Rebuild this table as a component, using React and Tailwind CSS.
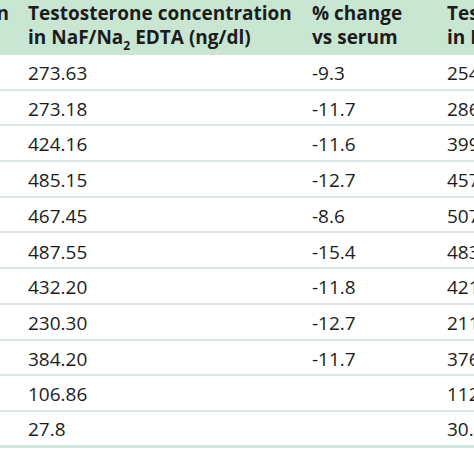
const rows = [
  ["273.63", "-9.3", "254.11"],
  ["273.18", "-11.7", "286.40"],
  ["424.16", "-11.6", "399.50"],
  ["485.15", "-12.7", "457.30"],
  ["467.45", "-8.6", "507.20"],
  ["487.55", "-15.4", "483.10"],
  ["432.20", "-11.8", "421.90"],
  ["230.30", "-12.7", "211.60"],
  ["384.20", "-11.7", "376.40"],
  ["106.86", "", "112.50"],
  ["27.8", "", "30.5"],
];

const cols = "grid grid-cols-[20px_284px_135px_120px]";

export default function App() {
  return (
    <div
      className="w-[474px] h-[474px] overflow-hidden bg-white text-[#1c1c1c]"
      style={{ fontFamily: '"Open Sans", "Noto Sans", sans-serif' }}
    >
      <div className={`${cols} bg-[#c9e6d3] h-[55px] pt-[1px] text-[19px] leading-[24px] font-bold`}>
        <div className="overflow-hidden flex justify-end pr-[11px]">
          <span className="whitespace-nowrap">n</span>
        </div>
        <div className="pl-[8px]">
          <div className="whitespace-nowrap">Testosterone concentration</div>
          <div className="whitespace-nowrap">
            in NaF/Na<sub className="text-[12px] align-[-3px]">2</sub> EDTA (ng/dl)
          </div>
        </div>
        <div className="pl-[8px]">
          <div className="whitespace-nowrap">% change</div>
          <div className="whitespace-nowrap">vs serum</div>
        </div>
        <div className="pl-[8px]">
          <div className="whitespace-nowrap">Testosterone</div>
          <div className="whitespace-nowrap">in NaF</div>
        </div>
      </div>
      {rows.map((r, i) => (
        <div
          key={i}
          className={`${cols} h-[35.7px] items-center pt-[3px] text-[19px] ${
            i === rows.length - 1
              ? "border-b-[3px] border-[#cfe5dc]"
              : "border-b-2 border-[#dbe7e3]"
          }`}
        >
          <div />
          <div className="pl-[8px]">{r[0]}</div>
          <div className="pl-[8px]">{r[1]}</div>
          <div className="pl-[8px] whitespace-nowrap">{r[2]}</div>
        </div>
      ))}
    </div>
  );
}
